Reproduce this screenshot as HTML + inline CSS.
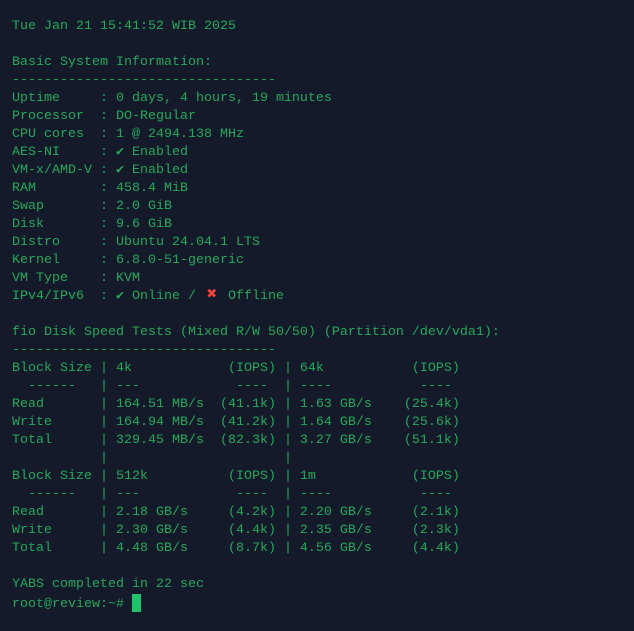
<!DOCTYPE html><html><head><style>
html,body{margin:0;background:#151a2b;width:634px;height:631px;overflow:hidden}
pre{margin:0;position:absolute;left:12px;top:18px;font-family:"Liberation Mono","DejaVu Sans Mono",monospace;font-size:13.33px;line-height:18px;color:#25a85a}
.x{display:inline-block;width:16px;color:#f0443a;font-weight:bold;text-align:center;font-size:17px;line-height:14px}
.c{display:inline-block;width:9px;height:18px;background:#1fc46a;vertical-align:-5px}
</style></head><body><pre>Tue Jan 21 15:41:52 WIB 2025

Basic System Information:
---------------------------------
Uptime     : 0 days, 4 hours, 19 minutes
Processor  : DO-Regular
CPU cores  : 1 @ 2494.138 MHz
AES-NI     : ✔ Enabled
VM-x/AMD-V : ✔ Enabled
RAM        : 458.4 MiB
Swap       : 2.0 GiB
Disk       : 9.6 GiB
Distro     : Ubuntu 24.04.1 LTS
Kernel     : 6.8.0-51-generic
VM Type    : KVM
IPv4/IPv6  : ✔ Online / <span class="x">✖</span> Offline

fio Disk Speed Tests (Mixed R/W 50/50) (Partition /dev/vda1):
---------------------------------
Block Size | 4k            (IOPS) | 64k           (IOPS)
  ------   | ---            ----  | ----           ----
Read       | 164.51 MB/s  (41.1k) | 1.63 GB/s    (25.4k)
Write      | 164.94 MB/s  (41.2k) | 1.64 GB/s    (25.6k)
Total      | 329.45 MB/s  (82.3k) | 3.27 GB/s    (51.1k)
           |                      |
Block Size | 512k          (IOPS) | 1m            (IOPS)
  ------   | ---            ----  | ----           ----
Read       | 2.18 GB/s     (4.2k) | 2.20 GB/s     (2.1k)
Write      | 2.30 GB/s     (4.4k) | 2.35 GB/s     (2.3k)
Total      | 4.48 GB/s     (8.7k) | 4.56 GB/s     (4.4k)

YABS completed in 22 sec
root@review:~# <span class="c"></span></pre></body></html>
